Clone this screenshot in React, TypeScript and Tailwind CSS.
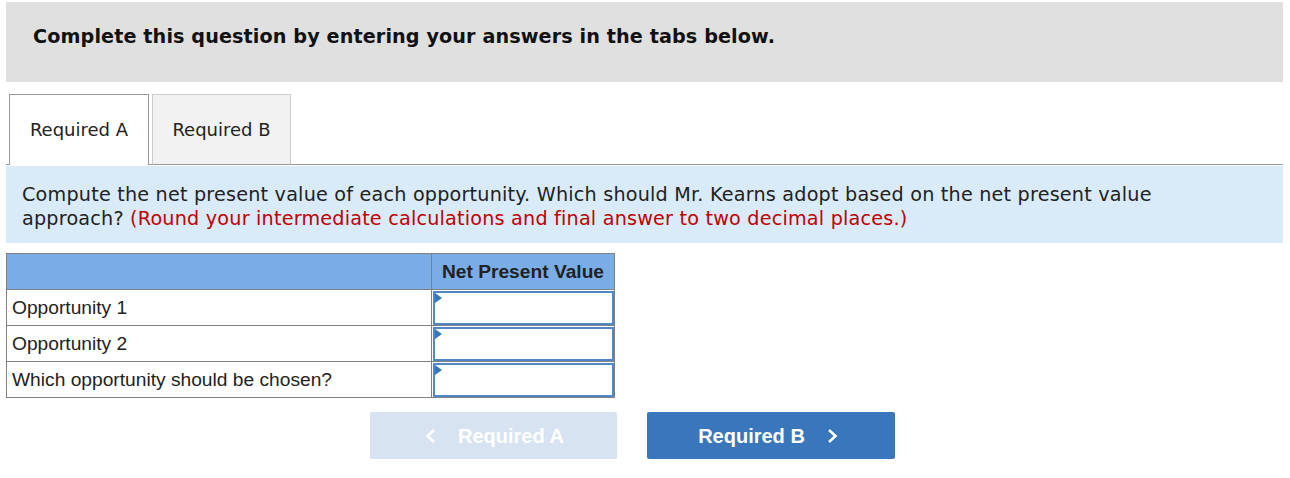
import React from "react";

function Triangle() {
  return (
    <svg className="absolute left-0 top-0" width="8" height="10" viewBox="0 0 8 10">
      <polygon points="0,0 7,5 0,10" fill="#3a76bb" />
    </svg>
  );
}

function InputCell() {
  return (
    <td className="border border-[#808080] p-0 pl-[1px] pt-[1px] align-top">
      <div className="relative h-[34px] w-[181px] border-2 border-[#4f87c8] bg-white">
        <Triangle />
      </div>
    </td>
  );
}

function Chevron({ dir }: { dir: "left" | "right" }) {
  return (
    <svg width="11" height="16" viewBox="0 0 11 16" fill="none">
      <polyline
        points={dir === "right" ? "2,2 8.5,8 2,14" : "9,2 2.5,8 9,14"}
        stroke="white"
        strokeWidth="2.6"
        strokeLinecap="butt"
        strokeLinejoin="miter"
      />
    </svg>
  );
}

export default function App() {
  const rows = ["Opportunity 1", "Opportunity 2", "Which opportunity should be chosen?"];
  return (
    <div className="h-[478px] w-[1290px] bg-white px-[6px] pt-[2px]">
      <div className="h-[80px] w-[1277px] bg-[#e0e0e0] pl-[27px] pt-[22px]">
        <div className="font-['DejaVu_Sans'] text-[19.2px] font-bold leading-[26px] tracking-[0.1px] text-[#111]">
          Complete this question by entering your answers in the tabs below.
        </div>
      </div>

      <div className="mt-[12px] flex h-[71px] w-[1277px] items-end">
        <div className="h-[1px] w-[3px] bg-[#999]" />
        <div className="flex h-[71px] w-[140px] items-center justify-center border border-b-0 border-[#999] bg-white pb-[1px] font-['DejaVu_Sans'] text-[18px] text-[#222]">
          Required A
        </div>
        <div className="h-[1px] w-[3px] bg-[#999]" />
        <div className="flex h-[71px] w-[139px] items-center justify-center border-x border-t border-b border-[#ccc] border-b-[#999] bg-[#f2f2f2] font-['DejaVu_Sans'] text-[18px] text-[#222]">
          Required B
        </div>
        <div className="h-[1px] flex-1 bg-[#999]" />
      </div>

      <div className="mt-[1px] h-[77px] w-[1277px] bg-[#d9ebf9] pl-[16px] pt-[17px] font-['DejaVu_Sans'] text-[19.2px] leading-[24px] tracking-[0.2px] text-[#222]">
        Compute the net present value of each opportunity. Which should Mr. Kearns adopt based on the net present value
        <br />
        approach? <span className="text-[#c00000]">(Round your intermediate calculations and final answer to two decimal places.)</span>
      </div>

      <table className="mt-[10px] border-collapse font-['Liberation_Sans'] text-[19.2px] text-[#222]">
        <thead>
          <tr className="h-[36px] bg-[#7aade6]">
            <th className="w-[425px] border border-[#808080] p-0" />
            <th className="w-[183px] border border-[#808080] p-0 text-center font-bold leading-[34px]">
              Net Present Value
            </th>
          </tr>
        </thead>
        <tbody>
          {rows.map((r) => (
            <tr key={r} className="h-[36px]">
              <td className="border border-[#808080] px-[5px] py-0 text-left align-middle leading-[34px]">{r}</td>
              <InputCell />
            </tr>
          ))}
        </tbody>
      </table>

      <div className="mt-[14px] flex gap-[30px] pl-[364px] font-['Liberation_Sans'] text-[20px] font-bold text-white">
        <div className="flex h-[47px] w-[247px] items-center justify-center gap-[22px] rounded-[2px] bg-[#d7e3f0] pl-[2px]">
          <Chevron dir="left" />
          <span>Required A</span>
        </div>
        <div className="flex h-[47px] w-[248px] items-center justify-center gap-[22px] rounded-[2px] bg-[#3a76bb] pr-[6px]">
          <span>Required B</span>
          <Chevron dir="right" />
        </div>
      </div>
    </div>
  );
}
